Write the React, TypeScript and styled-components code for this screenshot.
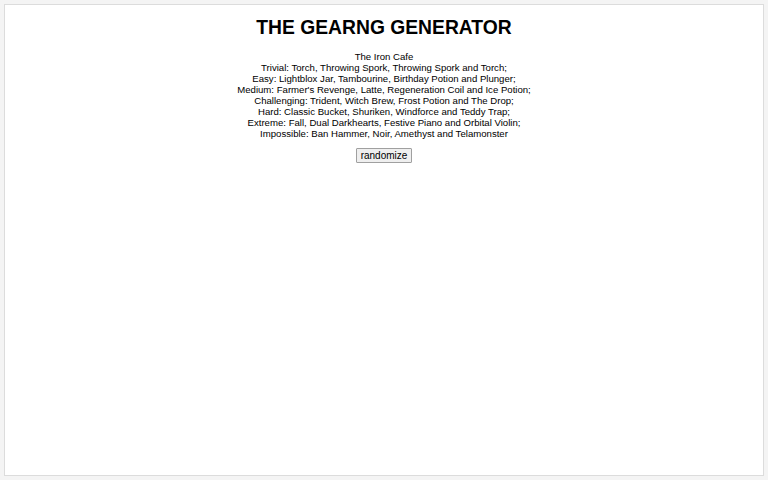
import styled, { createGlobalStyle } from 'styled-components';

const GlobalStyle = createGlobalStyle`
  html, body {
    margin: 0;
    padding: 0;
    background: #f4f4f4;
  }
  body {
    padding: 4px;
    font-family: "Liberation Sans", Arial, sans-serif;
  }
`;

const levels: { name: string; items: string }[] = [
  { name: 'Trivial', items: 'Torch, Throwing Spork, Throwing Spork and Torch;' },
  { name: 'Easy', items: 'Lightblox Jar, Tambourine, Birthday Potion and Plunger;' },
  { name: 'Medium', items: "Farmer's Revenge, Latte, Regeneration Coil and Ice Potion;" },
  { name: 'Challenging', items: 'Trident, Witch Brew, Frost Potion and The Drop;' },
  { name: 'Hard', items: 'Classic Bucket, Shuriken, Windforce and Teddy Trap;' },
  { name: 'Extreme', items: 'Fall, Dual Darkhearts, Festive Piano and Orbital Violin;' },
  { name: 'Impossible', items: 'Ban Hammer, Noir, Amethyst and Telamonster' },
];

export default function App() {
  return (
    <>
      <GlobalStyle />
      <Frame>
        <Title>THE GEARNG GENERATOR</Title>
        <Result>
          <Line>The Iron Cafe</Line>
          {levels.map((l) => (
            <Line key={l.name}>
              {l.name}: {l.items}
            </Line>
          ))}
        </Result>
        <RandomButton type="button">randomize</RandomButton>
      </Frame>
    </>
  );
}

const Frame = styled.div`
  box-sizing: border-box;
  height: 472px;
  background: #ffffff;
  border: 1px solid #dcdcdc;
  display: flex;
  flex-direction: column;
  align-items: center;
  color: #000;
`;

const Title = styled.h1`
  margin: 11px 0 0;
  font-size: 19.3px;
  font-weight: bold;
  line-height: 24px;
`;

const Result = styled.div`
  margin-top: 11px;
  text-align: center;
`;

const Line = styled.div`
  font-size: 9.6px;
  line-height: 11px;
`;

const RandomButton = styled.button`
  margin-top: 9px;
  font-family: "Liberation Sans", Arial, sans-serif;
  font-size: 10px;
  padding: 1px 4px;
  background: #efefef;
  border: 1px solid #a0a0a0;
  border-radius: 1px;
  color: #000;
`;
